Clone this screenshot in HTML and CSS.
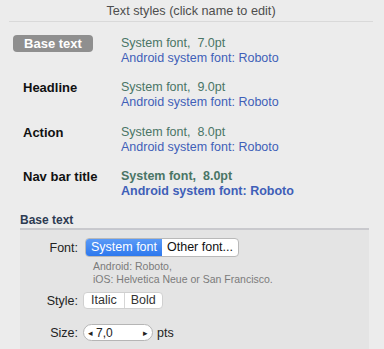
FILE: index.html
```html
<!DOCTYPE html>
<html>
<head>
<meta charset="utf-8">
<link rel="stylesheet" href="styles.css">
</head>
<body>
<div class="header">Text styles (click name to edit)</div>
<div class="styles">
  <div class="row">
    <div class="name"><span class="badge selected">Base text</span></div>
    <div class="desc"><div class="sys">System font,&nbsp; 7.0pt</div><div class="andr">Android system font: Roboto</div></div>
  </div>
  <div class="row">
    <div class="name"><span class="badge">Headline</span></div>
    <div class="desc"><div class="sys">System font,&nbsp; 9.0pt</div><div class="andr">Android system font: Roboto</div></div>
  </div>
  <div class="row">
    <div class="name"><span class="badge">Action</span></div>
    <div class="desc"><div class="sys">System font,&nbsp; 8.0pt</div><div class="andr">Android system font: Roboto</div></div>
  </div>
  <div class="row">
    <div class="name"><span class="badge">Nav bar title</span></div>
    <div class="desc bold"><div class="sys">System font,&nbsp; 8.0pt</div><div class="andr">Android system font: Roboto</div></div>
  </div>
</div>
<div class="section">
  <div class="section-title">Base text</div>
  <div class="panel">
    <div class="frow font-row">
      <div class="flabel">Font:</div>
      <div class="seg"><span class="segitem on">System font</span><span class="segitem">Other font...</span></div>
    </div>
    <div class="hint">Android: Roboto,<br>iOS: Helvetica Neue or San Francisco.</div>
    <div class="frow style-row">
      <div class="flabel">Style:</div>
      <div class="seg light"><span class="segitem">Italic</span><span class="segitem">Bold</span></div>
    </div>
    <div class="frow size-row">
      <div class="flabel">Size:</div>
      <div class="stepper"><span class="arr">&#9666;</span><span class="val">7,0</span><span class="arr">&#9656;</span></div>
      <span class="unit">pts</span>
    </div>
  </div>
</div>
</body>
</html>
```
FILE: styles.css
```css
html, body {
  margin: 0;
  padding: 0;
  background: #ececec;
  font-family: "Liberation Sans", Arial, sans-serif;
  width: 384px;
  height: 349px;
  overflow: hidden;
}
.header {
  margin: 0 11px 0 9px;
  height: 21px;
  line-height: 23px;
  text-align: center;
  font-size: 12.7px;
  color: #4e4e4e;
  border-bottom: 1px solid #d9d9d9;
}
.styles {
  padding-top: 13px;
}
.row {
  display: flex;
  height: 30px;
  margin-bottom: 14.3px;
}
.name {
  display: flex;
  align-items: flex-start;
  width: 108px;
  padding-left: 13px;
  box-sizing: content-box;
}
.badge {
  display: block;
  padding: 0 10px;
  height: 17px;
  line-height: 17px;
  font-weight: bold;
  font-size: 13px;
  color: #111;
  border-radius: 4px;
}
.badge.selected {
  background: #8f8f8f;
  color: #fff;
  width: 60px;
  text-align: center;
}
.desc {
  font-size: 12.5px;
  line-height: 15px;
  margin-top: 1px;
}
.desc.bold { font-weight: bold; }
.sys { color: #4a7566; }
.andr { color: #3f5fb8; }
.section {
  padding: 0 15px 0 20px;
}
.section-title {
  font-weight: bold;
  font-size: 12px;
  color: #2e3b52;
  height: 16px;
  line-height: 16px;
  margin-top: 1px;
  border-bottom: 2px solid #c9c9cd;
}
.panel {
  background: #e4e4e4;
  height: 119px;
  box-sizing: border-box;
  padding-top: 8px;
  overflow: hidden;
}
.frow {
  display: flex;
  align-items: center;
  font-size: 12.5px;
  color: #222;
}
.flabel {
  width: 58px;
  text-align: right;
  padding-right: 7px;
}
.seg {
  display: flex;
  height: 19px;
  border: 1px solid #b9b9b9;
  border-radius: 4px;
  background: #fff;
  box-sizing: border-box;
  overflow: hidden;
}
.font-row .seg { width: 154px; }
.segitem {
  line-height: 17px;
  color: #111;
}
.font-row .segitem { flex: 1; text-align: center; font-size: 12.5px; white-space: nowrap; }
.font-row .segitem:first-child { flex: 0 0 76px; }
.segitem.on {
  background: linear-gradient(#5a9af6, #2d78ee);
  color: #fff;
}
.seg.light { margin-left: -2px; height: 17px; border-color: #d0d0d0; }
.seg.light .segitem { padding: 0 6px; color: #333; line-height: 15px; }
.seg.light .segitem:first-child { border-right: 1px solid #d6d6d6; padding: 0 7px; }
.hint {
  margin: 3px 0 0 73px;
  font-size: 10.5px;
  line-height: 13px;
  color: #7b7b7b;
}
.style-row { margin-top: 6px; }
.size-row { margin-top: 15px; }
.stepper {
  display: flex;
  align-items: center;
  margin-left: -2px;
  width: 70px;
  height: 17px;
  border: 1px solid #b5b5b5;
  border-radius: 9px;
  background: #fff;
  box-sizing: border-box;
  padding: 0 4px;
  font-size: 12px;
}
.arr { font-size: 9px; color: #222; }
.val { flex: 1; padding-left: 3px; }
.unit { margin-left: 4px; }
```
